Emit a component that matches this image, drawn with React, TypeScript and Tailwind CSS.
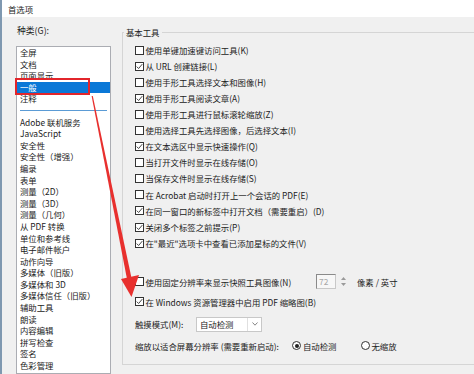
import React from 'react';

const Box = ({ checked }: { checked?: boolean }) => (
  <span className="w-[9px] h-[9px] border border-[#333] bg-white flex items-center justify-center shrink-0">
    {checked && (
      <svg width="7" height="7" viewBox="0 0 7 7">
        <path d="M0.7 3.6 L2.6 5.5 L6.3 1.1" fill="none" stroke="#333" strokeWidth="0.9" />
      </svg>
    )}
  </span>
);

const Radio = ({ checked }: { checked?: boolean }) => (
  <span className="w-[9px] h-[9px] rounded-full border border-[#333] bg-white flex items-center justify-center shrink-0">
    {checked && <span className="w-[4px] h-[4px] rounded-full bg-[#222]" />}
  </span>
);

const listItems: (string | null)[] = [
  '全屏',
  '文档',
  '页面显示',
  '一般',
  '注释',
  null,
  'Adobe 联机服务',
  'JavaScript',
  '安全性',
  '安全性（增强）',
  '编录',
  '表单',
  '测量（2D）',
  '测量（3D）',
  '测量（几何）',
  '从 PDF 转换',
  '单位和参考线',
  '电子邮件帐户',
  '动作向导',
  '多媒体（旧版）',
  '多媒体和 3D',
  '多媒体信任（旧版）',
  '辅助工具',
  '朗读',
  '内容编辑',
  '拼写检查',
  '签名',
  '色彩管理',
  '身份信息',
];

const checks: [string, boolean][] = [
  ['使用单键加速键访问工具(K)', false],
  ['从 URL 创建链接(L)', true],
  ['使用手形工具选择文本和图像(H)', false],
  ['使用手形工具阅读文章(A)', true],
  ['使用手形工具进行鼠标滚轮缩放(Z)', false],
  ['使用选择工具先选择图像，后选择文本(I)', false],
  ['在文本选区中显示快速操作(Q)', true],
  ['当打开文件时显示在线存储(O)', false],
  ['当保存文件时显示在线存储(S)', false],
  ['在 Acrobat 启动时打开上一个会话的 PDF(E)', false],
  ['在同一窗口的新标签中打开文档（需要重启）(D)', true],
  ['关闭多个标签之前提示(P)', true],
  ['在"最近"选项卡中查看已添加星标的文件(V)', true],
];

export default function App() {
  return (
    <div className="relative w-[474px] h-[374px] overflow-hidden bg-[#f0f0f0] border-l-2 border-[#7f98b0] font-['Noto_Sans_CJK_SC',sans-serif] text-[8.4px] text-[#222] flex flex-col">
      <div className="h-[17px] bg-white flex items-center pl-[6px] shrink-0 leading-[12px]">首选项</div>
      <div className="flex flex-1 min-h-0">
        <div className="ml-[14px] w-[95px] flex flex-col shrink-0">
          <div className="h-[12px] mt-[8px] pl-[1px] leading-[12px] text-[8.8px]">种类(G):</div>
          <div className="mt-[9px] h-[400px] bg-white border border-[#abadb3] overflow-hidden">
            {listItems.map((it, i) =>
              it === null ? (
                <div key={i} className="h-[11.6px] flex items-center px-[3px]">
                  <div className="h-px w-full bg-[#5b9bd5]" />
                </div>
              ) : (
                <div
                  key={i}
                  className={
                    'h-[11.6px] leading-[11.6px] px-[3px] whitespace-nowrap ' +
                    (it === '一般' ? 'bg-[#0a78d7] text-white' : '')
                  }
                >
                  {it}
                </div>
              )
            )}
          </div>
        </div>

        <fieldset className="ml-[11px] mt-[9px] w-[400px] h-[339px] border border-[#d5d5d5] shrink-0">
          <legend className="ml-[1px] px-[2px] leading-[12px]">基本工具</legend>
          <div className="pl-[12px] pt-[4px] flex flex-col">
            {checks.map(([t, c], i) => (
              <div key={i} className="h-[16.1px] flex items-center gap-[1.5px] whitespace-nowrap">
                <Box checked={c} />
                <span>{t}</span>
              </div>
            ))}

            <div className="mt-[22.7px] h-[16px] flex items-center gap-[1.5px] whitespace-nowrap">
              <Box />
              <span className="w-[169px]">使用固定分辨率来显示快照工具图像(N)</span>
              <div className="w-[20px] h-[15px] bg-[#f7f7f7] border border-[#c8c8c8] border-t-[#8a8a8a] border-l-[#8a8a8a] text-[#a8a8a8] pl-[2px] leading-[13px]">
                72
              </div>
              <div className="ml-[2px] w-[8px] h-[15px] flex flex-col items-center justify-center gap-[3px]">
                <svg width="5" height="3" viewBox="0 0 5 3">
                  <path d="M0 3 L2.5 0 L5 3Z" fill="#9a9a9a" />
                </svg>
                <svg width="5" height="3" viewBox="0 0 5 3">
                  <path d="M0 0 L2.5 3 L5 0Z" fill="#9a9a9a" />
                </svg>
              </div>
              <span className="ml-[8px]">像素 / 英寸</span>
            </div>

            <div className="mt-[4px] h-[16px] flex items-center gap-[1.5px] whitespace-nowrap">
              <Box checked />
              <span>在 Windows 资源管理器中启用 PDF 缩略图(B)</span>
            </div>

            <div className="mt-[6.5px] h-[16px] flex items-center whitespace-nowrap">
              <span className="w-[61px]">触摸模式(M):</span>
              <div className="w-[66px] h-[15px] bg-white border border-[#c8c8c8] flex items-center">
                <span className="flex-1 pl-[3px]">自动检测</span>
                <div className="w-[14px] h-full border-l border-[#e0e0e0] flex items-center justify-center">
                  <svg width="6" height="4" viewBox="0 0 6 4">
                    <path d="M0.5 0.5 L3 3.2 L5.5 0.5" fill="none" stroke="#777" strokeWidth="0.9" />
                  </svg>
                </div>
              </div>
            </div>

            <div className="mt-[5.5px] h-[16px] flex items-center whitespace-nowrap">
              <span className="w-[157px]">缩放以适合屏幕分辨率 (需要重新启动):</span>
              <Radio checked />
              <span className="ml-[2px]">自动检测</span>
              <span className="ml-[24px]">
                <Radio />
              </span>
              <span className="ml-[2px]">无缩放</span>
            </div>
          </div>
        </fieldset>
      </div>

      <div className="absolute left-[13px] top-[78px] w-[75px] h-[17px] border-2 border-[#e2252b]" />

      <svg className="absolute left-0 top-0 pointer-events-none" width="474" height="374" viewBox="0 0 474 374">
        <polygon points="89.6,96 90.8,96 129.5,278 125,279" fill="#e8302e" />
        <polygon points="119,279 137,275 129.5,297" fill="#e8302e" />
      </svg>
    </div>
  );
}
